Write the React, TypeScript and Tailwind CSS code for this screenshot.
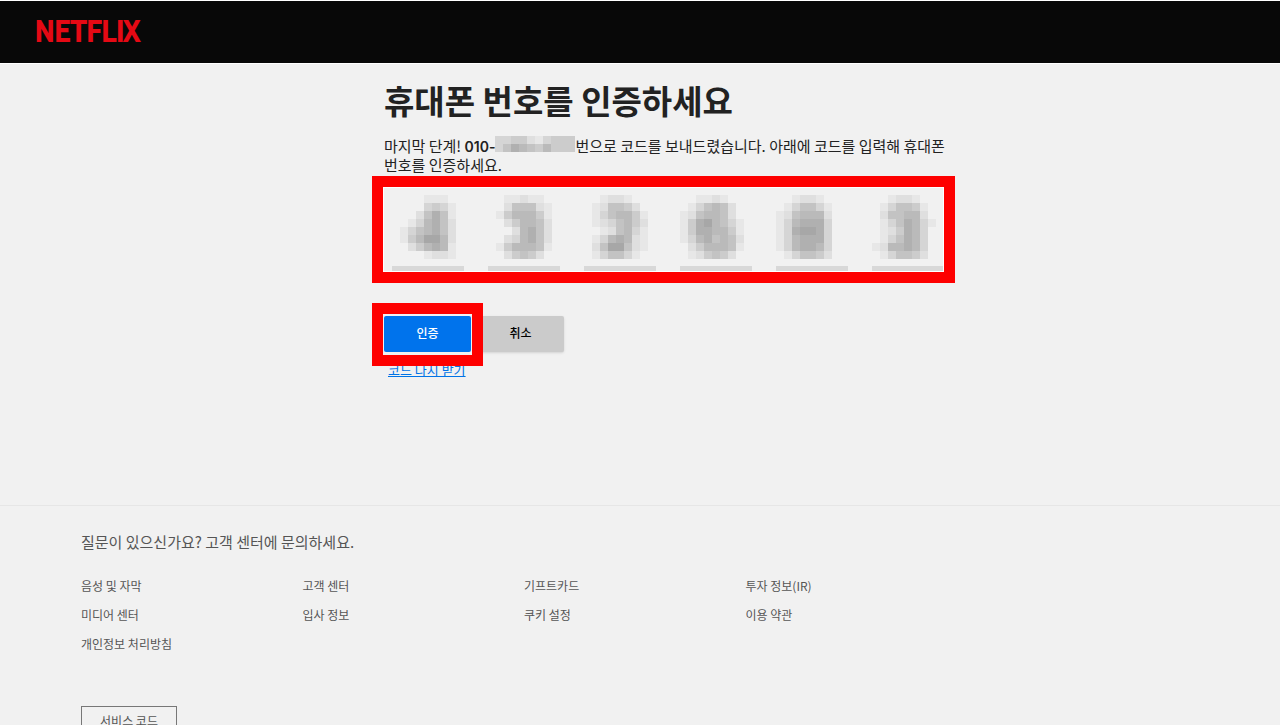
const mosaicLevels = [
  ["000011100", "000034310", "000257510", "001367520", "013567520", "014688620", "002467610", "000012210"],
  ["001121100", "002555210", "014666410", "002466520", "000267520", "002367520", "014666510", "002454200"],
  ["001221000", "012554200", "013566410", "012356420", "001256310", "013676210", "025885210", "013553100"],
  ["001121000", "013565200", "125665200", "147865310", "147766410", "136756520", "024666510", "012454200"],
  ["001221000", "013553100", "125666200", "136777300", "137887300", "136777300", "136776300", "013554200"],
  ["001221000", "013554100", "025566200", "013576310", "012476300", "013576300", "126676300", "013554200"],
]

const phoneMosaic = ["3344213444", "3576546444"]

const footerLinks = [
  "음성 및 자막",
  "고객 센터",
  "기프트카드",
  "투자 정보(IR)",
  "미디어 센터",
  "입사 정보",
  "쿠키 설정",
  "이용 약관",
  "개인정보 처리방침",
]

function Logo() {
  return (
    <svg width="120" height="48" viewBox="0 0 120 48" role="img" aria-label="NETFLIX">
      <text
        x="-1"
        y="33"
        fill="#e50914"
        stroke="#e50914"
        strokeWidth="2"
        fontSize="27"
        fontWeight="400"
        fontFamily="'Noto Sans CJK KR', sans-serif"
      >
        NETFLIX
      </text>
    </svg>
  )
}

function Mosaic({ rows, className }: { rows: string[]; className: string }) {
  const cols = rows[0].length
  return (
    <svg
      className={className}
      width={cols * 8}
      height={rows.length * 8}
      viewBox={`0 0 ${cols} ${rows.length}`}
      shapeRendering="crispEdges"
      aria-hidden="true"
    >
      {rows.map((row, y) =>
        row
          .split("")
          .map((level, x) => (
            <rect key={`${x}-${y}`} x={x} y={y} width="1" height="1" fill="#000" fillOpacity={Number(level) * 0.038} />
          ))
      )}
    </svg>
  )
}

export default function App() {
  return (
    <div className="h-screen overflow-hidden bg-[#f1f1f1] font-['Noto_Sans_CJK_KR',sans-serif] text-[#222]">
      <header className="flex h-16 items-center border-y border-white bg-[#080808] px-9">
        <a href="#">
          <Logo />
        </a>
      </header>

      <main className="ml-[30%] h-[441px] max-w-xl pt-[14px]">
        <h1 className="text-[33px] leading-[44px] font-bold">휴대폰 번호를 인증하세요</h1>
        <p className="mt-[14px] text-[15px] leading-[19px]">
          마지막 단계! <b className="font-['Inter',sans-serif] text-sm leading-4 font-semibold">010-</b>
          <Mosaic rows={phoneMosaic} className="inline-block align-top" />
          번으로 코드를 보내드렸습니다. 아래에 코드를 입력해 휴대폰 번호를 인증하세요.
        </p>

        <form>
          <div className="relative mt-[13px] h-[85px]">
            <div className="flex h-full gap-6 pl-2">
              {mosaicLevels.map((rows, i) => (
                <div key={i} className="relative w-[72px]">
                  <input
                    type="text"
                    maxLength={1}
                    aria-label={`코드 ${i + 1}`}
                    className="h-full w-full border-b-[6px] border-[#d8d8d8] text-center text-5xl outline-none"
                  />
                  <Mosaic rows={rows} className="pointer-events-none absolute top-2 left-0" />
                </div>
              ))}
            </div>
            <div className="pointer-events-none absolute -top-[11px] right-[5px] -bottom-[11px] -left-3 border-[11px] border-[#fe0000] ring-1 ring-white ring-inset" />
          </div>

          <div className="mt-11 flex gap-1.5 text-xs font-medium">
            <div className="relative">
              <button type="submit" className="h-9 w-[87px] rounded-[2px] bg-[#0073ec] pb-0.5 text-white">
                인증
              </button>
              <div className="pointer-events-none absolute -top-[13px] -right-3 -bottom-[14px] -left-3 z-10 border-[11px] border-[#fe0000]" />
            </div>
            <button type="button" className="h-9 w-[87px] rounded-[2px] bg-[#cbcbcb] pb-0.5 text-black shadow-sm">
              취소
            </button>
          </div>
          <a href="#" className="mt-2 ml-1 inline-block text-[13px] leading-5 text-[#0073e6] underline">
            코드 다시 받기
          </a>
        </form>
      </main>

      <footer className="border-t border-[#e6e6e6] px-[81px] pt-6 text-[#555]">
        <a href="#" className="block text-[15px] leading-6">
          질문이 있으신가요? 고객 센터에 문의하세요.
        </a>
        <ul className="mt-[22px] grid max-w-[886px] grid-cols-4 gap-y-[9px] text-xs leading-5">
          {footerLinks.map((label) => (
            <li key={label}>
              <a href="#">{label}</a>
            </li>
          ))}
        </ul>
        <button type="button" className="mt-[52px] w-24 border border-[#777] py-1 text-xs leading-5">
          서비스 코드
        </button>
      </footer>
    </div>
  )
}
